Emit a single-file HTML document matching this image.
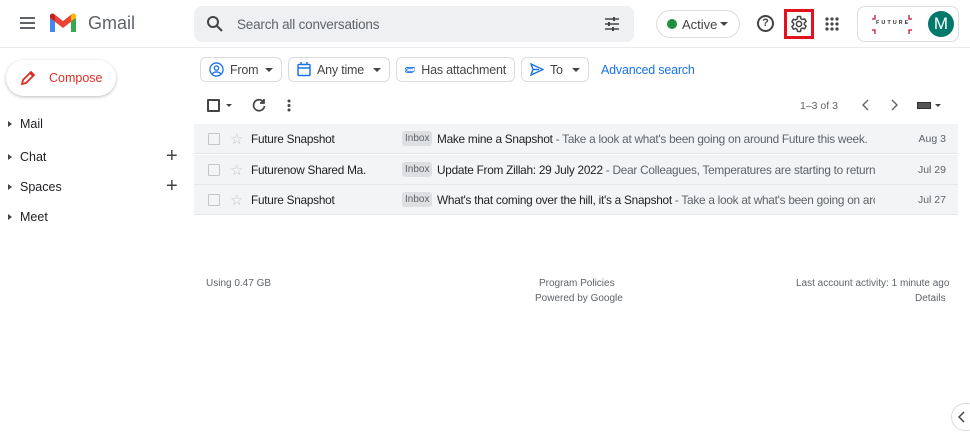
<!DOCTYPE html>
<html><head><meta charset="utf-8">
<style>
*{box-sizing:border-box;margin:0;padding:0}
body{width:970px;height:440px;overflow:hidden;background:#fff;font-family:"Liberation Sans",Arial,sans-serif;color:#202124;position:relative}
.a{position:absolute;white-space:nowrap}
.chip{position:absolute;top:57px;height:25px;border:1px solid #dadce0;border-radius:6px;font-size:12.5px;letter-spacing:-0.2px;color:#444746;display:flex;align-items:center;gap:6px;padding:0 8px;white-space:nowrap}
.row{position:absolute;left:194px;width:764px;height:30px;background:#f2f4f5;border-bottom:1px solid #e4e6e8;font-size:11.8px;letter-spacing:-0.25px;display:flex;align-items:center}
.cb{position:absolute;left:14px;width:12px;height:12px;border:1.5px solid #c4c6c8;border-radius:1px}
.star{position:absolute;left:36px;color:#c4c6c8;font-size:15px}
.from{position:absolute;left:57px;color:#202124}
.lbl{position:absolute;left:208px;background:#dddfe1;color:#5f6368;font-size:10px;letter-spacing:0;padding:2px 3px;border-radius:3px}
.sub{position:absolute;left:243px;width:438px;overflow:hidden;white-space:nowrap;color:#202124}
.sub span{color:#5f6368}
.date{position:absolute;right:12px;font-size:10.5px;color:#5f6368;letter-spacing:0}
.nav{position:absolute;left:10px;font-size:12.5px;color:#202124}
.nav:before{content:"";position:absolute;left:-2px;top:4px;border-left:4px solid #444;border-top:3px solid transparent;border-bottom:3px solid transparent}
.nav b{font-weight:normal;margin-left:10px}
.plus{position:absolute;left:166px;font-size:20px;color:#444;font-weight:300}
.ft{position:absolute;font-size:10px;color:#5f6368;white-space:nowrap}
</style></head><body>
<div class="a" style="left:0;top:47px;width:970px;height:1px;background:#e8eaed"></div>
<div class="a" style="left:20px;top:17px;width:15px;height:2px;background:#5f6368;box-shadow:0 5px 0 #5f6368,0 10px 0 #5f6368"></div>
<svg class="a" style="left:49px;top:13px" width="28" height="21" viewBox="0 0 28 21"><path d="M1 5v14h5V8z" fill="#4285f4"/><path d="M22 8v11h5V5z" fill="#34a853"/><path d="M1 5l13 10 13-10V3c0-2-2-3-4-2l-9 7-9-7C3 0 1 1 1 3z" fill="#ea4335"/><path d="M22 3v5l5-3V3c0-2-2-3-4-2z" fill="#fbbc04"/><path d="M1 3v2l5 3V3L5 1C3 0 1 1 1 3z" fill="#c5221f"/></svg>
<div class="a" style="left:88px;top:13px;font-size:18px;color:#5f6368">Gmail</div>
<div class="a" style="left:194px;top:6px;width:440px;height:36px;background:#eef0f2;border-radius:8px"></div>
<svg class="a" style="left:206px;top:15px" width="18" height="18" viewBox="0 0 18 18"><circle cx="7" cy="7" r="5" fill="none" stroke="#444" stroke-width="2"/><path d="M11 11l5 5" stroke="#444" stroke-width="2"/></svg>
<div class="a" style="left:237px;top:17px;font-size:13.5px;color:#5f6368;letter-spacing:-0.2px">Search all conversations</div>
<svg class="a" style="left:604px;top:16px" width="16" height="16" viewBox="0 0 16 16" stroke="#444" stroke-width="1.6"><path d="M1 3h14M1 8h14M1 13h14"/><path d="M10 1v4M5 6v4M9 11v4" stroke-width="2"/></svg>
<div class="a" style="left:656px;top:10px;width:84px;height:28px;border:1px solid #dadce0;border-radius:14px"></div>
<div class="a" style="left:667px;top:19px;width:10px;height:10px;border-radius:50%;background:#1e8e3e"></div>
<div class="a" style="left:682px;top:17px;font-size:13px;color:#444">Active</div>
<div class="a" style="left:720px;top:22px;border-top:4px solid #444;border-left:4px solid transparent;border-right:4px solid transparent"></div>
<div class="a" style="left:757px;top:15px;width:17px;height:17px;border:2px solid #444;border-radius:50%;font-size:11px;font-weight:bold;text-align:center;line-height:13px;color:#444">?</div>
<div class="a" style="left:784px;top:9px;width:30px;height:30px;border:3px solid #e3121c"></div>
<svg class="a" style="left:790px;top:15px" width="18" height="18" viewBox="0 0 24 24"><path d="M12 8.5a3.5 3.5 0 1 0 0 7 3.5 3.5 0 0 0 0-7z M10 2h4l.6 3 2 1.1 2.9-1 2 3.5-2.3 2v2.3l2.3 2-2 3.5-2.9-1-2 1.1L14 22h-4l-.6-3-2-1.1-2.9 1-2-3.5 2.3-2v-2.3l-2.3-2 2-3.5 2.9 1 2-1.1z" fill="none" stroke="#444" stroke-width="2" stroke-linejoin="round"/></svg>
<svg class="a" style="left:825px;top:17px" width="14" height="14"><g fill="#444"><circle cx="2" cy="2" r="1.6"/><circle cx="7" cy="2" r="1.6"/><circle cx="12" cy="2" r="1.6"/><circle cx="2" cy="7" r="1.6"/><circle cx="7" cy="7" r="1.6"/><circle cx="12" cy="7" r="1.6"/><circle cx="2" cy="12" r="1.6"/><circle cx="7" cy="12" r="1.6"/><circle cx="12" cy="12" r="1.6"/></g></svg>
<div class="a" style="left:857px;top:6px;width:102px;height:36px;border:1px solid #dadce0;border-radius:8px"></div>
<svg class="a" style="left:872px;top:15px" width="40" height="19" viewBox="0 0 40 19" stroke="#c8102e" stroke-width="1.3" fill="none"><path d="M3 0v4H0M37 0v4h3M3 19v-4H0M37 19v-4h3"/></svg>
<div class="a" style="left:876px;top:20px;font-size:5.5px;letter-spacing:2px;color:#333;font-weight:bold">FUTURE</div>
<div class="a" style="left:928px;top:11px;width:26px;height:26px;border-radius:50%;background:#00796b;color:#fff;font-size:17px;text-align:center;line-height:26px">M</div>
<div class="a" style="left:6px;top:60px;width:110px;height:36px;border-radius:18px;background:#fff;box-shadow:0 1px 3px rgba(60,64,67,.35)"></div>
<svg class="a" style="left:20px;top:70px" width="16" height="16" viewBox="0 0 16 16"><path d="M2 14l1-4 8-8 3 3-8 8z M10 3l3 3" fill="none" stroke="#d93025" stroke-width="1.8"/></svg>
<div class="a" style="left:49px;top:71px;font-size:12.5px;color:#d93025">Compose</div>
<div class="nav" style="top:117px"><b>Mail</b></div>
<div class="nav" style="top:150px"><b>Chat</b></div>
<div class="nav" style="top:180px"><b>Spaces</b></div>
<div class="nav" style="top:210px"><b>Meet</b></div>
<div class="plus" style="top:145px">+</div>
<div class="plus" style="top:175px">+</div>
<div class="chip" style="left:200px;width:82px"><svg width="15" height="15" viewBox="0 0 16 16" fill="none" stroke="#1a73e8" stroke-width="1.4"><circle cx="8" cy="8" r="7"/><circle cx="8" cy="6.5" r="2.3"/><path d="M3.5 12.5c2.5-2.5 6.5-2.5 9 0"/></svg>From<span style="margin-left:auto;border-top:4px solid #444;border-left:4px solid transparent;border-right:4px solid transparent"></span></div>
<div class="chip" style="left:288px;width:102px"><svg width="14" height="15" viewBox="0 0 14 15" fill="none" stroke="#1a73e8" stroke-width="1.5"><rect x="1" y="2.5" width="12" height="11" rx="1"/><path d="M1 6h12M4 0v3M10 0v3"/></svg>Any time<span style="margin-left:auto;border-top:4px solid #444;border-left:4px solid transparent;border-right:4px solid transparent"></span></div>
<div class="chip" style="left:396px;width:119px"><svg width="16" height="10" viewBox="0 0 16 10" fill="none" stroke="#1a73e8" stroke-width="1.4"><path d="M12 3H4.5a2 2 0 0 0 0 4H13a3 3 0 0 0 0-6H4a4 4 0 0 0 0 8h8"/></svg>Has attachment</div>
<div class="chip" style="left:521px;width:68px"><svg width="14" height="13" viewBox="0 0 14 13" fill="none" stroke="#1a73e8" stroke-width="1.4"><path d="M1 1l12 5.5L1 12l2-5.5z M3 6.5h6"/></svg>To<span style="margin-left:auto;border-top:4px solid #444;border-left:4px solid transparent;border-right:4px solid transparent"></span></div>
<div class="a" style="left:601px;top:63px;font-size:12.5px;color:#1a73e8;letter-spacing:-0.2px">Advanced search</div>
<div class="a" style="left:207px;top:99px;width:13px;height:13px;border:2px solid #444;border-radius:1px"></div>
<div class="a" style="left:226px;top:104px;border-top:3.5px solid #444;border-left:3.5px solid transparent;border-right:3.5px solid transparent"></div>
<svg class="a" style="left:252px;top:98px" width="14" height="14" viewBox="0 0 14 14" fill="none" stroke="#444" stroke-width="1.7"><path d="M11.5 4A5.5 5.5 0 1 0 12.5 8"/><path d="M12 1v4H8" fill="#444"/></svg>
<svg class="a" style="left:287px;top:99px" width="4" height="13"><g fill="#444"><circle cx="2" cy="2" r="1.5"/><circle cx="2" cy="6.5" r="1.5"/><circle cx="2" cy="11" r="1.5"/></g></svg>
<div class="a" style="left:800px;top:100px;font-size:10.5px;color:#5f6368">1–3 of 3</div>
<svg class="a" style="left:860px;top:99px" width="40" height="12" fill="none" stroke="#5f6368" stroke-width="1.4"><path d="M8 1L3 6l5 5M32 1l5 5-5 5"/></svg>
<div class="a" style="left:917px;top:102px;width:14px;height:7px;background:#555;border:1px solid #333"></div>
<div class="a" style="left:935px;top:104px;border-top:3.5px solid #444;border-left:3.5px solid transparent;border-right:3.5px solid transparent"></div>
<div class="row" style="top:124px"><div class="cb"></div><div class="star">☆</div><div class="from">Future Snapshot</div><div class="lbl">Inbox</div><div class="sub">Make mine a Snapshot <span>- Take a look at what's been going on around Future this week. &nbsp;&nbsp;&nbsp;&nbsp;&nbsp;…</span></div><div class="date">Aug 3</div></div>
<div class="row" style="top:155px"><div class="cb"></div><div class="star">☆</div><div class="from">Futurenow Shared Ma.</div><div class="lbl">Inbox</div><div class="sub">Update From Zillah: 29 July 2022 <span>- Dear Colleagues, Temperatures are starting to return …</span></div><div class="date">Jul 29</div></div>
<div class="row" style="top:185px"><div class="cb"></div><div class="star">☆</div><div class="from">Future Snapshot</div><div class="lbl">Inbox</div><div class="sub">What's that coming over the hill, it's a Snapshot <span>- Take a look at what's been going on aro…</span></div><div class="date">Jul 27</div></div>
<div class="ft" style="left:206px;top:278px">Using 0.47 GB</div>
<div class="ft" style="left:539px;top:278px">Program Policies</div>
<div class="ft" style="left:535px;top:293px">Powered by Google</div>
<div class="ft" style="left:796px;top:278px">Last account activity: 1 minute ago</div>
<div class="ft" style="left:915px;top:293px">Details</div>
<div class="a" style="left:951px;top:403px;width:30px;height:28px;border:1px solid #dadce0;border-radius:14px;background:#fff"></div>
<svg class="a" style="left:958px;top:411px" width="8" height="12" fill="none" stroke="#444" stroke-width="1.5"><path d="M6 1L1 6l5 5"/></svg>
</body></html>
